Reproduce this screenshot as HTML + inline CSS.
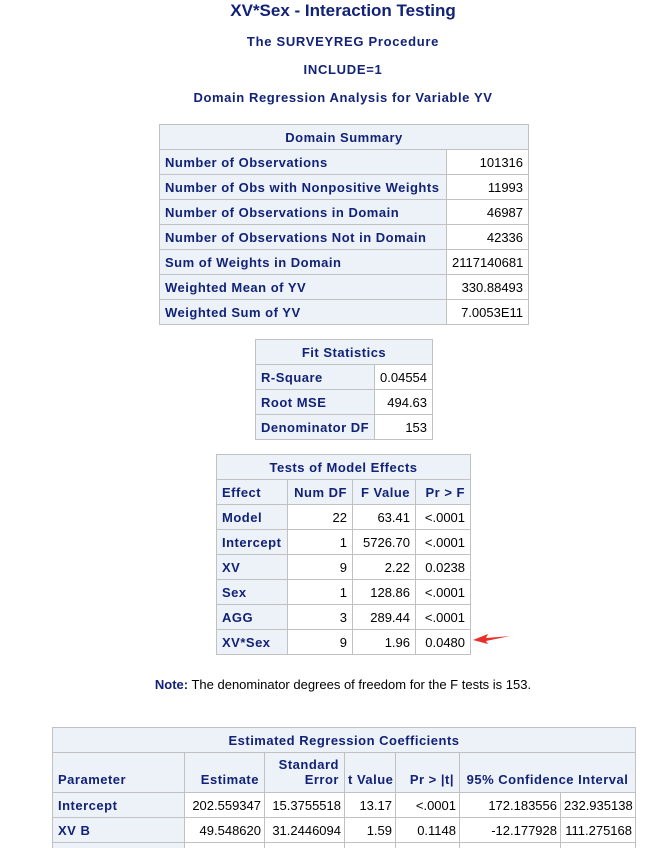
<!DOCTYPE html>
<html><head><meta charset="utf-8"><style>
html,body{margin:0;width:665px;height:848px;overflow:hidden}
body{background:#fff;font-family:"Liberation Sans",Arial,sans-serif;color:#112277;position:relative}
.t{position:absolute;left:0;width:686px;text-align:center;font-weight:bold}
table{position:absolute;border-collapse:collapse;table-layout:fixed;font-size:13px}
td,th{border:1px solid #c1c1c1;padding:0 5px;height:24px;box-sizing:border-box;white-space:nowrap;overflow:hidden}
th{background:#edf2f9;font-weight:bold;color:#112277;letter-spacing:0.5px}
th.l{text-align:left}
th.r{text-align:right}
td{text-align:right;color:#000;background:#fff}
.e td{padding:0 3px}
</style></head><body>
<div class="t" style="top:1px;font-size:17px">XV*Sex - Interaction Testing</div>
<div class="t" style="top:34px;font-size:13px;letter-spacing:0.7px">The SURVEYREG Procedure</div>
<div class="t" style="top:62px;font-size:13px;letter-spacing:0.7px">INCLUDE=1</div>
<div class="t" style="top:90px;font-size:13px;letter-spacing:0.6px">Domain Regression Analysis for Variable YV</div>

<table style="left:159px;top:124px;width:369px">
<col style="width:287px"><col style="width:82px">
<tr><th colspan="2" style="height:25px">Domain Summary</th></tr>
<tr><th class="l" style="height:25px">Number of Observations</th><td>101316</td></tr>
<tr><th class="l" style="height:25px">Number of Obs with Nonpositive Weights</th><td>11993</td></tr>
<tr><th class="l" style="height:25px">Number of Observations in Domain</th><td>46987</td></tr>
<tr><th class="l" style="height:25px">Number of Observations Not in Domain</th><td>42336</td></tr>
<tr><th class="l" style="height:25px">Sum of Weights in Domain</th><td>2117140681</td></tr>
<tr><th class="l" style="height:25px">Weighted Mean of YV</th><td>330.88493</td></tr>
<tr><th class="l" style="height:25px">Weighted Sum of YV</th><td>7.0053E11</td></tr>
</table>

<table style="left:255px;top:339px;width:177px">
<col style="width:119px"><col style="width:58px">
<tr><th colspan="2" style="height:25px">Fit Statistics</th></tr>
<tr><th class="l" style="height:25px">R-Square</th><td>0.04554</td></tr>
<tr><th class="l" style="height:25px">Root MSE</th><td>494.63</td></tr>
<tr><th class="l" style="height:25px">Denominator DF</th><td>153</td></tr>
</table>

<table style="left:216px;top:454px;width:254px">
<col style="width:71px"><col style="width:65px"><col style="width:63px"><col style="width:55px">
<tr><th colspan="4" style="height:25px">Tests of Model Effects</th></tr>
<tr><th class="l" style="height:25px">Effect</th><th class="r">Num DF</th><th class="r">F Value</th><th class="r">Pr &gt; F</th></tr>
<tr><th class="l" style="height:25px">Model</th><td>22</td><td>63.41</td><td>&lt;.0001</td></tr>
<tr><th class="l" style="height:25px">Intercept</th><td>1</td><td>5726.70</td><td>&lt;.0001</td></tr>
<tr><th class="l" style="height:25px">XV</th><td>9</td><td>2.22</td><td>0.0238</td></tr>
<tr><th class="l" style="height:25px">Sex</th><td>1</td><td>128.86</td><td>&lt;.0001</td></tr>
<tr><th class="l" style="height:25px">AGG</th><td>3</td><td>289.44</td><td>&lt;.0001</td></tr>
<tr><th class="l" style="height:25px">XV*Sex</th><td>9</td><td>1.96</td><td>0.0480</td></tr>
</table>
<svg style="position:absolute;left:470px;top:630px" width="42" height="16"><path d="M3 10 L18 4 L16 8 L40 6 L16 11 L18 14 Z" fill="#e8302a"/></svg>

<div style="position:absolute;left:0;width:686px;top:677px;text-align:center;font-size:13px;color:#000"><b style="color:#112277">Note:</b> The denominator degrees of freedom for the F tests is 153.</div>

<table class="e" style="left:52px;top:727px;width:583px">
<col style="width:132px"><col style="width:80px"><col style="width:80px"><col style="width:51px"><col style="width:64px"><col style="width:101px"><col style="width:75px">
<tr><th colspan="7" style="height:25px">Estimated Regression Coefficients</th></tr>
<tr><th class="l" style="height:40px;vertical-align:bottom;padding-bottom:5px">Parameter</th><th class="r" style="vertical-align:bottom;padding-bottom:5px">Estimate</th><th class="r" style="vertical-align:bottom;padding-bottom:5px;line-height:15px">Standard<br>Error</th><th class="r" style="vertical-align:bottom;padding:0 3px 5px 3px">t Value</th><th class="r" style="vertical-align:bottom;padding-bottom:5px">Pr &gt; |t|</th><th colspan="2" style="vertical-align:bottom;padding-bottom:5px">95% Confidence Interval</th></tr>
<tr><th class="l" style="height:25px">Intercept</th><td>202.559347</td><td>15.3755518</td><td>13.17</td><td>&lt;.0001</td><td>172.183556</td><td>232.935138</td></tr>
<tr><th class="l" style="height:25px">XV B</th><td>49.548620</td><td>31.2446094</td><td>1.59</td><td>0.1148</td><td>-12.177928</td><td>111.275168</td></tr>
<tr><th class="l" style="height:25px">&nbsp;</th><td></td><td></td><td></td><td></td><td></td><td></td></tr>
</table>
</body></html>
